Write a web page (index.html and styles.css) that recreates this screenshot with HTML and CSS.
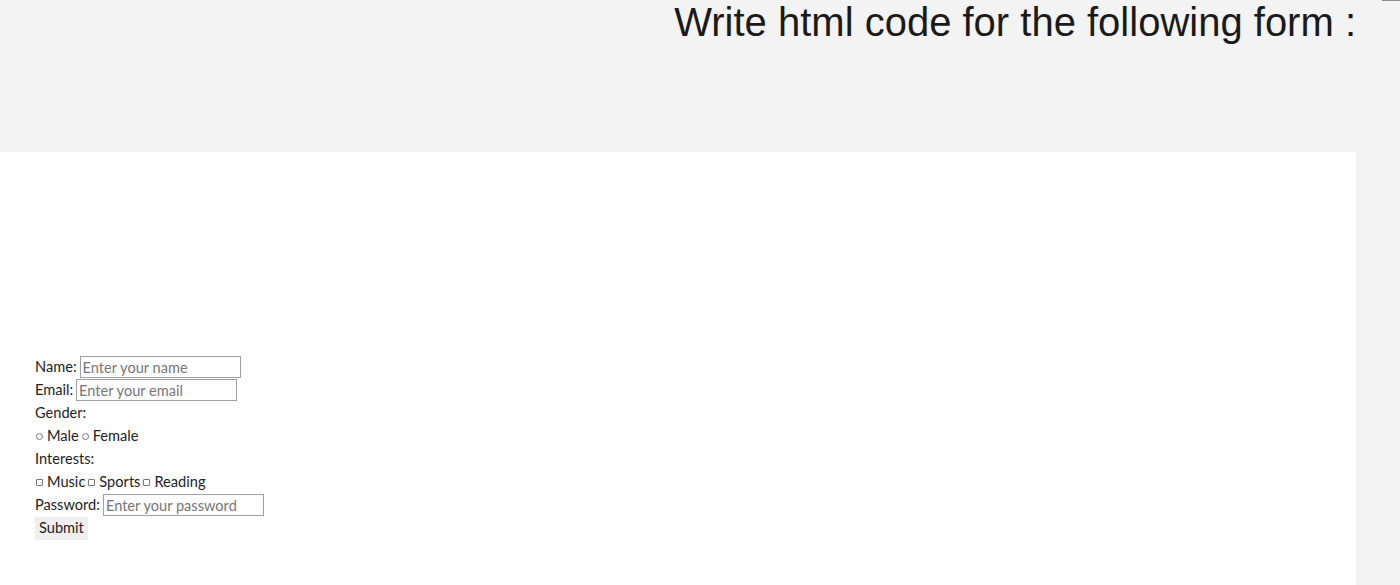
FILE: index.html
```html
<!DOCTYPE html>
<html>
<head>
    <title>Form</title>
    <link rel="stylesheet" href="styles.css">
</head>
<body>
    <div class="corner"></div>
    <div class="head">
        <h1 class="t">Write html code for the following form :</h1>
    </div>
    <!-- the form -->
    <div class="box">
        <form class="f">
            <div class="row">
                <label for="name">Name:</label>
                <input type="text" id="name" name="name" placeholder="Enter your name" class="a">
            </div>
            <div class="row">
                <label for="email">Email:</label>
                <input type="email" id="email" name="email" placeholder="Enter your email" class="a">
            </div>
            <div class="row">
                <label>Gender:</label>
            </div>
            <div class="row">
                <input type="radio" id="male" name="gender" value="male" class="r">
                <label for="male">Male</label>
                <input type="radio" id="female" name="gender" value="female" class="r">
                <label for="female">Female</label>
            </div>
            <div class="row">
                <label>Interests:</label>
            </div>
            <div class="row">
                <input type="checkbox" id="music" name="interests" value="music" class="c">
                <label for="music">Music</label>
                <input type="checkbox" id="sports" name="interests" value="sports" class="c">
                <label for="sports">Sports</label>
                <input type="checkbox" id="reading" name="interests" value="reading" class="c">
                <label for="reading">Reading</label>
            </div>
            <div class="row">
                <label for="password">Password:</label>
                <input type="password" id="password" name="password" placeholder="Enter your password" class="a">
            </div>
            <div class="row">
                <button type="submit" class="v">Submit</button>
            </div>
        </form>
    </div>
</body>
</html>
```

FILE: styles.css
```css
body {
    margin: 0;
    background-color: #f3f3f3;
    overflow: hidden;
}

.corner {
    position: absolute;
    top: -20px;
    left: 1382px;
    width: 30px;
    height: 20px;
    border: 1px solid #8a8a8a;
    border-top: none;
    background: #f3f3f3;
}

.head {
    height: 152px;
    padding-right: 44px;
    text-align: right;
}

.t {
    margin: 0;
    font-family: "Liberation Sans", Arial, sans-serif;
    font-size: 40px;
    font-weight: normal;
    color: #1a1a1a;
}

.box {
    width: 1356px;
    height: 433px;
    box-sizing: border-box;
    padding: 204px 35px 0 35px;
    background-color: #fff;
}

.f {
    font-family: Lato, "Noto Sans", sans-serif;
    font-size: 14.6px;
    color: #222;
}

.row {
    display: flex;
    align-items: center;
    height: 23px;
}

.row label {
    margin-right: 3px;
    padding-bottom: 2px;
}

.a {
    width: 161px;
    height: 22px;
    box-sizing: border-box;
    margin: 0 0 1px 0;
    padding: 1px 2px;
    border: 1px solid #a0a0a0;
    font-family: Lato, "Noto Sans", sans-serif;
    font-size: 14.6px;
    color: #222;
}

.a::placeholder {
    color: #777;
}

.r,
.c {
    appearance: none;
    -webkit-appearance: none;
    box-sizing: border-box;
    width: 7px;
    height: 7px;
    margin: 0 4px 0 0;
    border: 1px solid #777;
    background-color: #fff;
}

.r:first-child,
.c:first-child {
    margin-left: 1px;
}

.r {
    border-radius: 50%;
}

.c {
    border-radius: 1px;
}

.v {
    height: 23px;
    padding: 0 4px 2px 4px;
    border: none;
    background-color: #efefef;
    font-family: Lato, "Noto Sans", sans-serif;
    font-size: 14.6px;
    color: #222;
}
```
